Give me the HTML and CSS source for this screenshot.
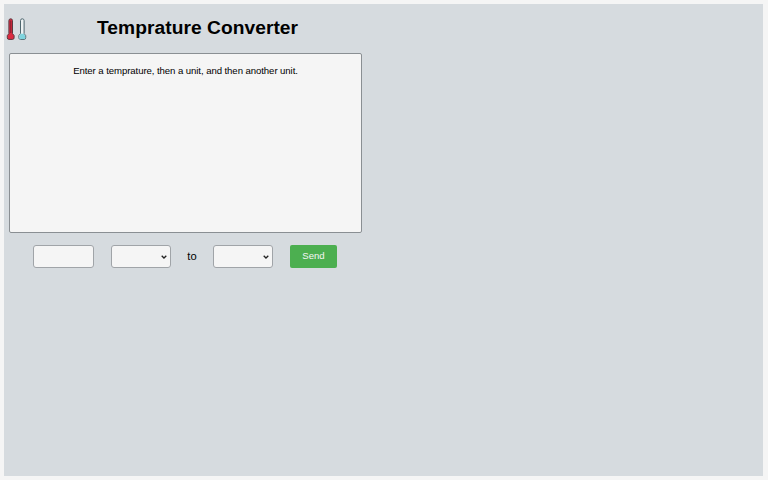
FILE: index.html
```html
<!DOCTYPE html>
<html lang="en">
<head>
<meta charset="utf-8">
<title>Temprature Converter</title>
<link rel="stylesheet" href="styles.css">
</head>
<body>
<main class="app">
  <div class="panel">
    <header class="head">
      <svg class="icon" width="24" height="24" viewBox="0 0 24 24" aria-hidden="true">
        <path d="M5.9 2.6a1.8 1.8 0 0 1 3.6 0V15.6l1.6 2v2.2a1.6 1.6 0 0 1-1.6 1.6H5.9a1.6 1.6 0 0 1-1.6-1.6V17.6l1.6-2Z" fill="#dc2a40" stroke="#5a3a40"/>
        <path d="M7.7 2.5v12.5" stroke="#9a2030" stroke-width="1.4"/>
        <path d="M17.5 2.6a1.8 1.8 0 0 1 3.6 0V15.6l1.6 2v2.2a1.6 1.6 0 0 1-1.6 1.6H17.5a1.6 1.6 0 0 1-1.6-1.6V17.6l1.6-2Z" fill="#eef2f3" stroke="#4e666e"/>
        <path d="M17.9 15.8h2.8l1.5 2v2.6a.6.6 0 0 1-.6.6H17a.6.6 0 0 1-.6-.6V17.8Z" fill="#7fd4de"/>
      </svg>
      <h1 class="title">Temprature Converter</h1>
    </header>
    <section class="output">
      <p class="message">Enter a temprature, then a unit, and then another unit.</p>
    </section>
    <form class="controls">
      <input class="field value" type="text">
      <select class="field unit"><option></option></select>
      <span class="to">to</span>
      <select class="field unit"><option></option></select>
      <button class="send" type="button">Send</button>
    </form>
  </div>
</main>
</body>
</html>
```
FILE: styles.css
```css
* { box-sizing: border-box; }
html, body { height: 100%; }
body {
  margin: 0;
  padding: 4px;
  background: #f5f5f5;
  font-family: "Liberation Sans", Arial, sans-serif;
  color: #000;
}
.app {
  height: 472px;
  width: 759px;
  background: #d6dbdf;
}
.panel {
  width: 358px;
  padding: 0 0 0 5px;
}
.head {
  height: 49px;
  display: flex;
  align-items: center;
}
.icon { flex: none; margin-left: -6px; margin-top: 2px; }
.title {
  margin: -1px 0 0 70px;
  font-size: 19.2px;
  letter-spacing: 0.05px;
  font-weight: 700;
  line-height: 24px;
  white-space: nowrap;
}
.output {
  width: 353px;
  height: 180px;
  background: #f5f5f5;
  border: 1px solid #8a8f93;
  border-radius: 2px;
  padding: 11px 0 0;
}
.message {
  margin: 0;
  font-size: 9.6px;
  letter-spacing: -0.074px;
  line-height: 12px;
  text-align: center;
}
.controls {
  display: flex;
  align-items: center;
  height: 23px;
  margin-top: 12px;
  padding-left: 24px;
}
.field {
  height: 23px;
  background: #f5f5f5;
  border: 1px solid #a0a4a8;
  border-radius: 3px;
  font-family: inherit;
  font-size: 9.6px;
  padding: 0;
}
.value { width: 61px; margin-right: 17px; }
.unit {
  width: 60px;
  appearance: none;
  background: #f5f5f5 url("data:image/svg+xml,%3Csvg xmlns='http://www.w3.org/2000/svg' width='6' height='4'%3E%3Cpath d='M.7.7l2.3 2.3L5.3.7' fill='none' stroke='%23222' stroke-width='1.3'/%3E%3C/svg%3E") no-repeat right 3px center;
}
.to { width: 42px; margin-top: -2px; text-align: center; font-size: 11.2px; }
.send {
  width: 47px;
  height: 23px;
  margin-left: 17px;
  background: #4caf50;
  border: 0;
  border-radius: 2px;
  color: #f5f5f5;
  font-family: inherit;
  font-size: 9.6px;
  padding: 0 0 2px;
}
```
